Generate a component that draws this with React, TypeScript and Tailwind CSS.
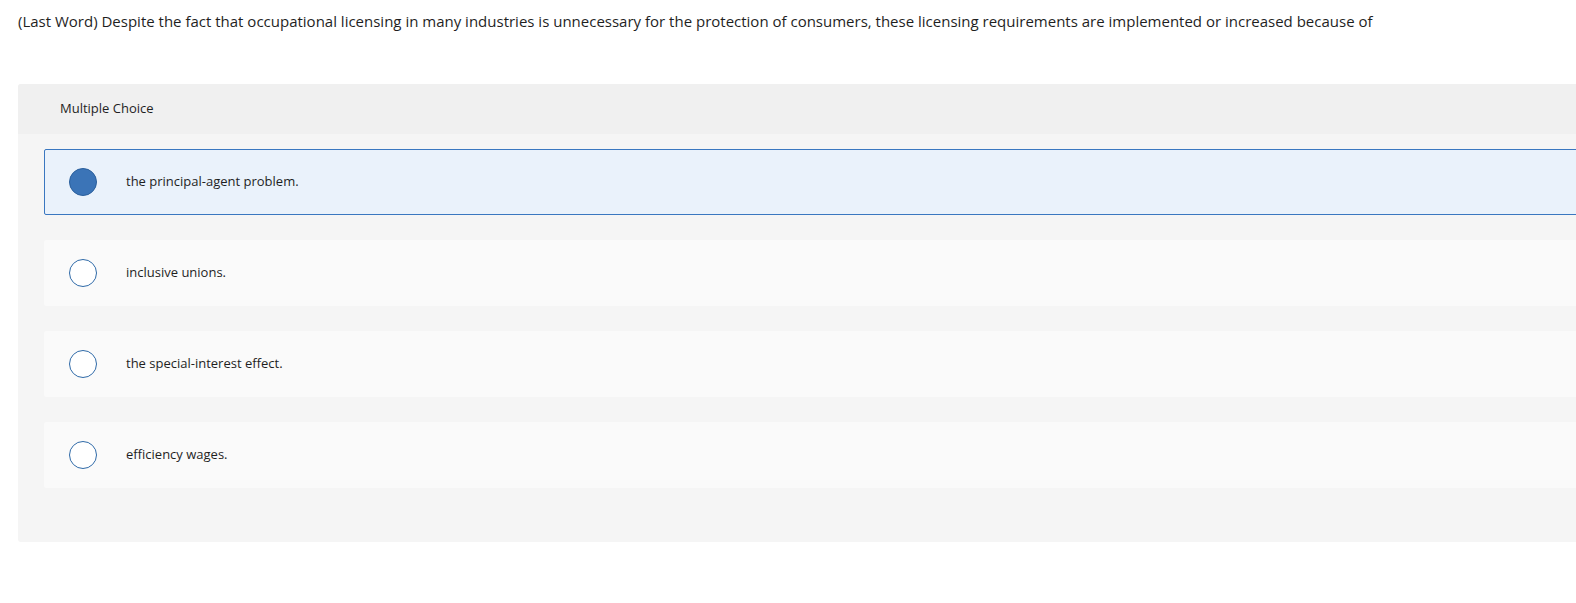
const OPTIONS = [
  "the principal-agent problem.",
  "inclusive unions.",
  "the special-interest effect.",
  "efficiency wages.",
]

function Radio({ checked }: { checked: boolean }) {
  if (checked) {
    return <span className="block w-[28px] h-[28px] rounded-full bg-[#3b74b7] border border-[#2a5f9c] shrink-0" />
  }
  return <span className="block w-[28px] h-[28px] rounded-full bg-white border-[1.5px] border-[#2f6aa8] shrink-0" />
}

export default function App() {
  const selected = 0
  return (
    <div className="w-full h-[603px] overflow-hidden bg-white text-[#1f1f1f]" style={{ fontFamily: "'Open Sans', Lato, sans-serif" }}>
      <p className="pl-[18px] pt-[11px] text-[15px] leading-[20px]">
        (Last Word) Despite the fact that occupational licensing in many industries is unnecessary for the protection of
        consumers, these licensing requirements are implemented or increased because of
      </p>
      <div className="ml-[18px] mt-[53px] w-[1600px] rounded-tl-[3px] rounded-bl-[3px] bg-[#f5f5f5] overflow-hidden">
        <div className="h-[50px] bg-[#f0f0f0] flex items-center pl-[42px] text-[13px]">Multiple Choice</div>
        <div className="pl-[26px] pt-[15px] pb-[54px] flex flex-col gap-[25px]">
          {OPTIONS.map((opt, i) => (
            <div
              key={opt}
              className={
                i === selected
                  ? "h-[66px] shrink-0 flex items-center pl-[24px] rounded-[2px] border border-[#3a77c0] bg-[#eaf2fb]"
                  : "h-[66px] shrink-0 flex items-center pl-[24px] rounded-[2px] border border-transparent bg-[#fafafa]"
              }
            >
              <Radio checked={i === selected} />
              <span className="ml-[29px] text-[13px]">{opt}</span>
            </div>
          ))}
        </div>
      </div>
    </div>
  )
}
